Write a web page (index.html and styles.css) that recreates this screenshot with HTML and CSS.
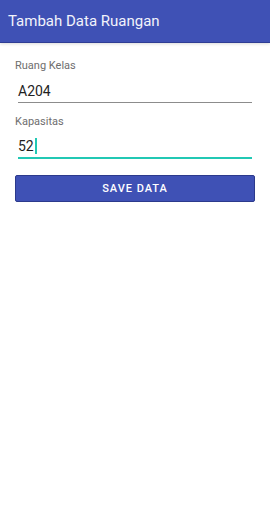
FILE: index.html
```html
<!DOCTYPE html>
<html lang="id">
  <head>
    <meta charset="UTF-8" />
    <meta name="viewport" content="width=device-width, initial-scale=1.0" />
    <title>Tambah Data Ruangan</title>
    <link rel="stylesheet" href="styles.css">
  </head>
  <body>
    <header class="toolbar">
      <h1>Tambah Data Ruangan</h1>
    </header>

    <section class="form">
      <div class="field">
        <label for="ruang">Ruang Kelas</label>
        <div class="inputBox">
          <span id="ruang" class="valor">A204</span>
        </div>
      </div>

      <div class="field">
        <label for="kapasitas">Kapasitas</label>
        <div class="inputBox fokus">
          <span id="kapasitas" class="valor">52</span><span class="cursor"></span>
        </div>
      </div>

      <button type="button">Save Data</button>
    </section>
  </body>
</html>
```

FILE: styles.css
```css
* {
  margin: 0;
  padding: 0;
  border: 0;
  box-sizing: border-box;
  font-family: Roboto, "Liberation Sans", sans-serif;
}

body {
  background-color: #ffffff;
  width: 270px;
  height: 523px;
}

.toolbar {
  display: flex;
  align-items: center;
  height: 43px;
  padding-left: 8px;
  background-color: #3f51b5;
  border-bottom: 1px solid #2f3d94;
  box-shadow: 0 1px 3px rgba(0, 0, 0, 0.15);
}

.toolbar h1 {
  font-size: 15px;
  font-weight: 400;
  color: #f2f3fb;
  margin-top: -1px;
}

.form {
  display: flex;
  flex-direction: column;
  padding: 16px 15px 0 15px;
}

.field {
  display: flex;
  flex-direction: column;
  margin-bottom: 12px;
}

label {
  font-size: 11px;
  color: #6e6e6e;
  height: 14px;
  line-height: 14px;
}

.inputBox {
  display: flex;
  align-items: center;
  margin: 6px 3px 0 3px;
  height: 24px;
  border-bottom: 1px solid #8c8c8c;
}

.valor {
  font-size: 14px;
  color: #1f1f1f;
}

.fokus {
  border-bottom: 2px solid #21c8b4;
}

.cursor {
  width: 2px;
  height: 16px;
  margin-left: 1px;
  background-color: #21c8b4;
}

button {
  height: 27px;
  margin-top: 4px;
  background-color: #3f51b5;
  border: 1px solid #2c3a8c;
  border-radius: 2px;
  color: #ffffff;
  font-size: 11px;
  font-weight: 500;
  letter-spacing: 1px;
  text-transform: uppercase;
}
```
